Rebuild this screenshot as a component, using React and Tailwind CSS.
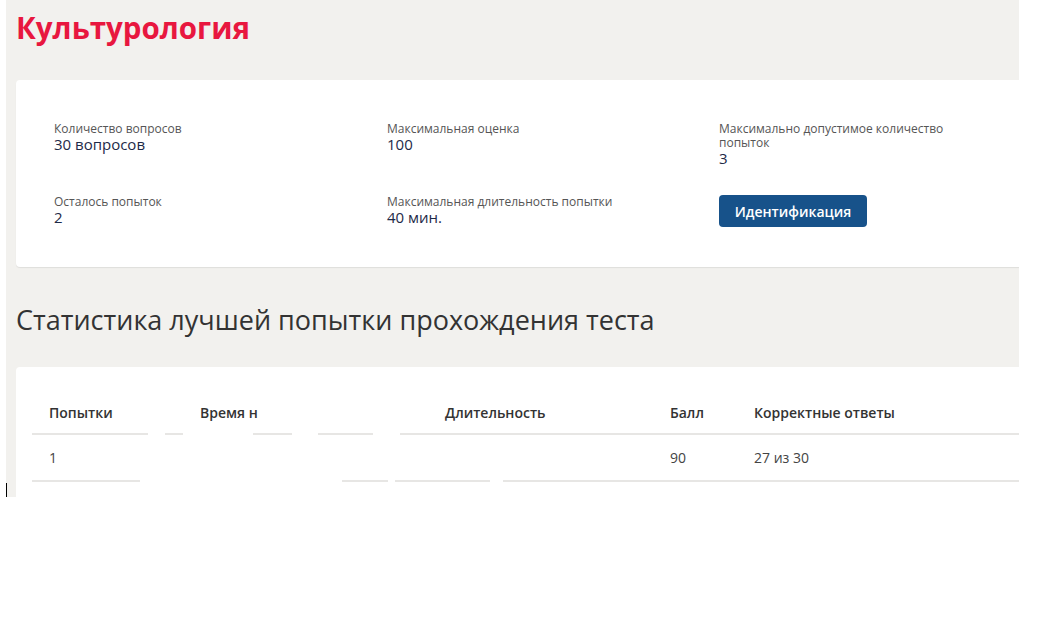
import React from 'react';

const info = [
  { label: 'Количество вопросов', value: '30 вопросов' },
  { label: 'Максимальная оценка', value: '100' },
  { label: 'Максимально допустимое количество попыток', value: '3' },
  { label: 'Осталось попыток', value: '2' },
  { label: 'Максимальная длительность попытки', value: '40 мин.' },
];

const columns = ['Попытки', 'Время н', 'Длительность', 'Балл', 'Корректные ответы'];
const rows = [['1', '', '', '90', '27 из 30']];

function InfoItem({ label, value }) {
  return (
    <div>
      <p className="text-[12px] leading-[14px] text-[#555]">{label}</p>
      <p className="text-[15px] leading-[16px] text-[#1e2a48]">{value}</p>
    </div>
  );
}

// lines under the table rows have gaps where the screenshot was erased
function HeaderLine() {
  return (
    <div className="flex h-[2px]">
      <div className="w-[116px] bg-[#e7e6e4]" />
      <div className="ml-[17px] w-[18px] bg-[#e7e6e4]" />
      <div className="ml-[70px] w-[39px] bg-[#e7e6e4]" />
      <div className="ml-[26px] w-[55px] bg-[#e7e6e4]" />
      <div className="ml-[27px] flex-1 bg-[#e7e6e4]" />
    </div>
  );
}

function RowLine() {
  return (
    <div className="flex h-[2px]">
      <div className="w-[108px] bg-[#e7e6e4]" />
      <div className="ml-[202px] w-[46px] bg-[#e7e6e4]" />
      <div className="ml-[7px] w-[95px] bg-[#e7e6e4]" />
      <div className="ml-[13px] flex-1 bg-[#e7e6e4]" />
    </div>
  );
}

const grid = 'grid grid-cols-[151px_245px_225px_84px_1fr]';

export default function App() {
  return (
    <div className="relative w-[1047px] h-[618px] bg-white overflow-hidden font-['Open_Sans',sans-serif]">
      <div className="ml-[6px] w-[1013px] h-[497px] bg-[#f2f1ee] overflow-hidden pl-[10px]">
        <h1 className="pt-[8px] text-[29.5px] leading-[40px] font-bold text-[#e8173f]">Культурология</h1>

        {/* Test info */}
        <div className="mt-[32px] w-[1100px] rounded-[4px] bg-white shadow-[0_1px_1px_rgba(0,0,0,0.08)] pt-[42px] pb-[40px] pl-[38px]">
          <div className="grid grid-cols-[333px_332px_250px] gap-y-[29px] items-start">
            {info.slice(0, 3).map((item) => (
              <InfoItem key={item.label} {...item} />
            ))}
            {info.slice(3).map((item) => (
              <InfoItem key={item.label} {...item} />
            ))}
            <button className="w-[148px] h-[32px] rounded-[4px] bg-[#17528a] text-[14px] font-semibold text-white">
              Идентификация
            </button>
          </div>
        </div>

        <h2 className="mt-[37px] text-[27px] leading-[32px] text-[#333]">
          Статистика лучшей попытки прохождения теста
        </h2>

        {/* Best attempt */}
        <div className="mt-[31px] w-[1100px] h-[200px] rounded-[4px] bg-white pt-[36px] px-[16px]">
          <div className={grid}>
            {columns.map((c) => (
              <div key={c} className="px-[17px] pb-[10px] text-[14px] leading-[20px] font-semibold text-[#333]">
                {c}
              </div>
            ))}
          </div>
          <HeaderLine />
          {rows.map((r, i) => (
            <div key={i}>
              <div className={grid}>
                {r.map((cell, j) => (
                  <div key={j} className="px-[17px] pt-[13px] pb-[12px] text-[14px] leading-[20px] text-[#444]">
                    {cell}
                  </div>
                ))}
              </div>
              <RowLine />
            </div>
          ))}
        </div>
      </div>
      <div className="absolute left-[6px] top-[483px] w-[1px] h-[14px] bg-black" />
    </div>
  );
}
